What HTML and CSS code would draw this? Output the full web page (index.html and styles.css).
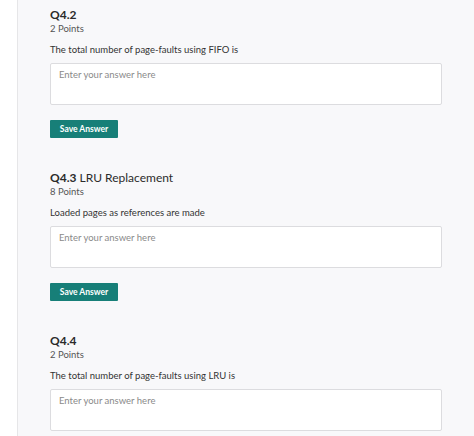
FILE: index.html
```html
<!DOCTYPE html>
<html>
<head>
<meta charset="utf-8">
<link rel="stylesheet" href="styles.css">
</head>
<body>
<div class="page">
  <div class="rail"></div>
  <main class="main">
    <section class="question">
      <h2 class="q-title"><span class="q-num">Q4.2</span></h2>
      <div class="q-points">2 Points</div>
      <p class="q-prompt">The total number of page-faults using FIFO is</p>
      <div class="answer">Enter your answer here</div>
      <button class="save">Save Answer</button>
    </section>
    <section class="question">
      <h2 class="q-title"><span class="q-num">Q4.3</span> LRU Replacement</h2>
      <div class="q-points">8 Points</div>
      <p class="q-prompt">Loaded pages as references are made</p>
      <div class="answer">Enter your answer here</div>
      <button class="save">Save Answer</button>
    </section>
    <section class="question">
      <h2 class="q-title"><span class="q-num">Q4.4</span></h2>
      <div class="q-points">2 Points</div>
      <p class="q-prompt">The total number of page-faults using LRU is</p>
      <div class="answer">Enter your answer here</div>
    </section>
  </main>
</div>
</body>
</html>
```
FILE: styles.css
```css
html, body {
  margin: 0;
  padding: 0;
  background: #ffffff;
  height: 100%;
}
body {
  font-family: Lato, "Liberation Sans", sans-serif;
  color: #333;
  overflow: hidden;
}
.page {
  display: flex;
  min-height: 436px;
}
.rail {
  width: 17px;
  flex: none;
  background: #ffffff;
  border-right: 1px solid #e6e6e8;
}
.main {
  flex: 1;
  background: #f8f8fa;
  padding: 7px 32px 0 32px;
}
.question {
  margin-bottom: 32px;
}
.q-title {
  margin: 0;
  font-size: 12px;
  line-height: 16px;
  font-weight: 400;
  color: #2b2b2b;
}
.q-num {
  font-weight: 700;
}
.q-points {
  font-size: 9.5px;
  line-height: 12px;
  color: #555;
}
.q-prompt {
  margin: 9px 0 7px 0;
  font-size: 9.5px;
  line-height: 12px;
  color: #333;
}
.answer {
  box-sizing: border-box;
  height: 42px;
  width: 392px;
  background: #fff;
  border: 1px solid #dcdcdf;
  border-radius: 2px;
  padding: 5px 8px;
  font-size: 9.5px;
  line-height: 12px;
  color: #8a8a8a;
}
.save {
  display: block;
  margin-top: 15px;
  height: 18px;
  width: 68px;
  padding: 0;
  border: none;
  border-radius: 1px;
  background: #177f78;
  color: #fff;
  font-family: inherit;
  font-size: 8.5px;
  font-weight: 700;
  line-height: 18px;
}
```
